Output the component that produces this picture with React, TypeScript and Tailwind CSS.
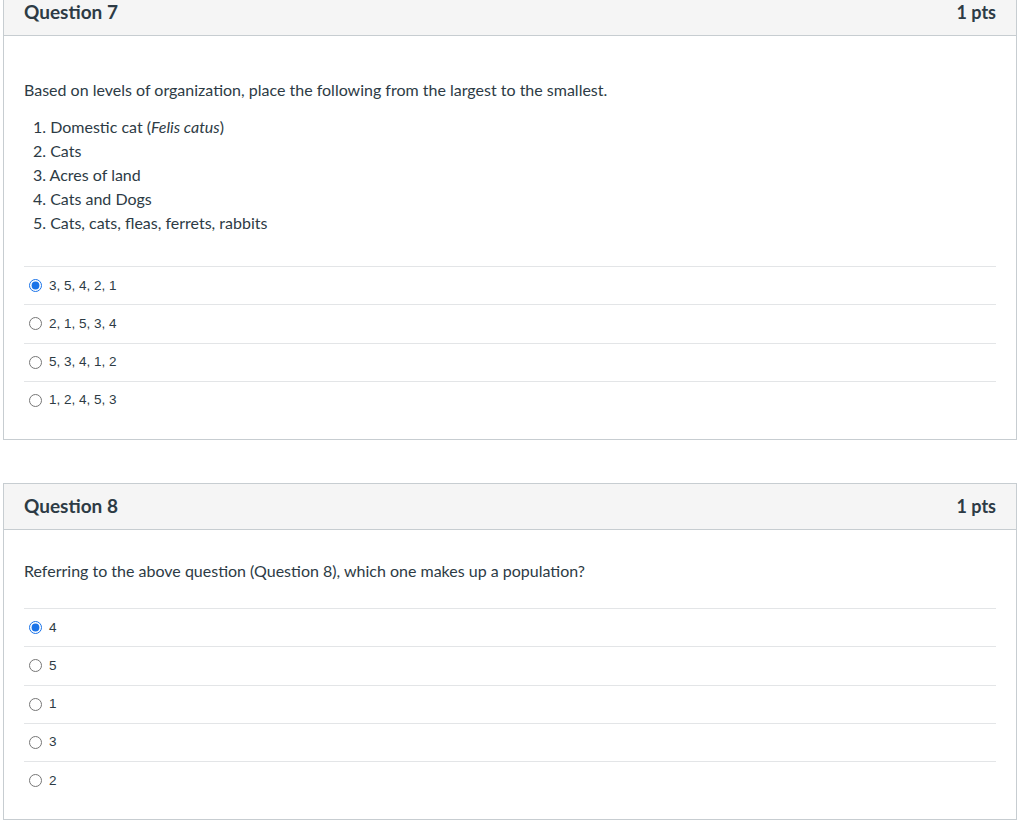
import React from "react";

type Question = {
  title: string;
  answers: string[];
  selected: number;
};

function Radio({ checked }: { checked: boolean }) {
  return (
    <input
      type="radio"
      checked={checked}
      readOnly
      className="m-0 h-[13px] w-[13px] accent-[#1a73e8]"
    />
  );
}

function AnswerList({ answers, selected, name }: { answers: string[]; selected: number; name: string }) {
  return (
    <div className="mx-[20px]">
      {answers.map((a, i) => (
        <label
          key={a + name}
          className="flex h-[38.25px] items-center gap-[7px] border-t border-[#e3e5e7] pl-[5px] text-[13.5px] text-[#2d3b45]"
          style={{ fontFamily: '"Liberation Sans", Arial, sans-serif' }}
        >
          <Radio checked={i === selected} />
          <span>{a}</span>
        </label>
      ))}
    </div>
  );
}

function QuestionCard({
  q,
  children,
}: {
  q: Question;
  children: React.ReactNode;
}) {
  return (
    <div className="ml-[3px] mr-[7px] border border-[#c7cdd1] bg-white">
      <div className="flex h-[46px] items-center justify-between border-b border-[#c7cdd1] bg-[#f5f5f5] pl-[20px] pr-[20px]">
        <h2 className="text-[19px] font-bold text-[#2d3b45]">{q.title}</h2>
        <span className="text-[18px] font-bold text-[#2d3b45]">1 pts</span>
      </div>
      {children}
      <AnswerList answers={q.answers} selected={q.selected} name={q.title} />
      <div className="h-[20px]" />
    </div>
  );
}

export default function App() {
  const q7: Question = {
    title: "Question 7",
    answers: ["3, 5, 4, 2, 1", "2, 1, 5, 3, 4", "5, 3, 4, 1, 2", "1, 2, 4, 5, 3"],
    selected: 0,
  };

  const q8: Question = {
    title: "Question 8",
    answers: ["4", "5", "1", "3", "2"],
    selected: 0,
  };

  return (
    <main
      className="min-h-screen bg-white text-[#2d3b45] mt-[-11px]"
      style={{ fontFamily: "Lato, 'Open Sans', sans-serif" }}
    >
      {/* QUESTION 7 */}
      <QuestionCard q={q7}>
        <div className="px-[20px] pt-[42px] pb-[31px] text-[16px] leading-[24px]">
          <p className="mb-[13px]">
            Based on levels of organization, place the following from the largest to the smallest.
          </p>
          <ol className="pl-[9px]">
            <li>1. Domestic cat (<em>Felis catus</em>)</li>
            <li>2. Cats</li>
            <li>3. Acres of land</li>
            <li>4. Cats and Dogs</li>
            <li>5. Cats, cats, fleas, ferrets, rabbits</li>
          </ol>
        </div>
      </QuestionCard>

      <div className="h-[43px]" />

      {/* QUESTION 8 */}
      <QuestionCard q={q8}>
        <div className="px-[20px] pt-[29px] pb-[25px] text-[16px] leading-[24px]">
          <p>Referring to the above question (Question 8), which one makes up a population?</p>
        </div>
      </QuestionCard>
    </main>
  );
}
